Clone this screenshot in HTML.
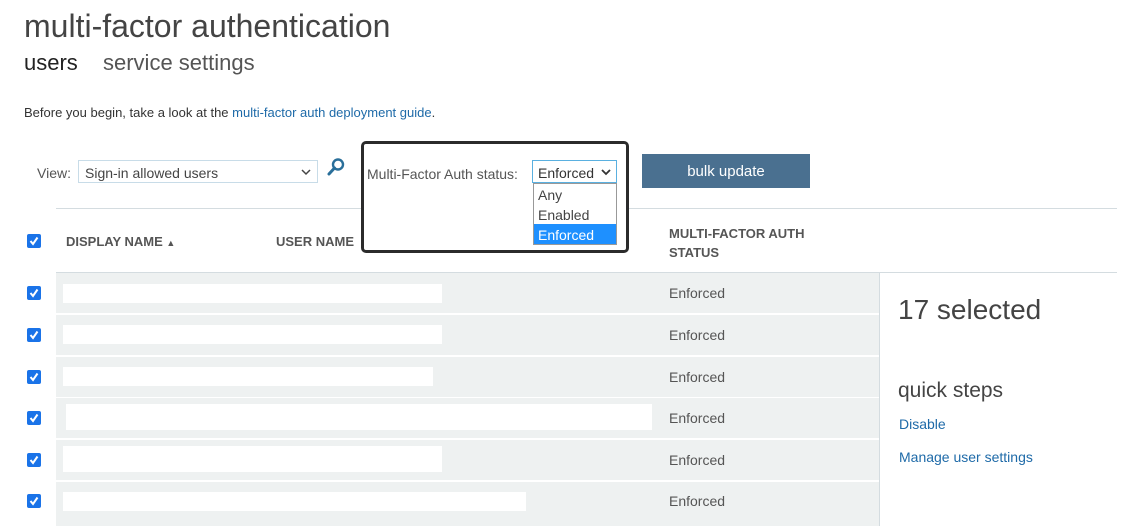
<!DOCTYPE html>
<html><head><meta charset="utf-8"><style>
body{margin:0;width:1140px;height:526px;background:#fff;font-family:"Liberation Sans",sans-serif;color:#333;position:relative;overflow:hidden}
.a{position:absolute;white-space:nowrap}
.cb{position:absolute;left:27px;width:14px;height:14px;background:#1a73e8;border-radius:2px}
.cb svg{position:absolute;left:2px;top:2px}
.row{position:absolute;left:56px;width:823px;height:40px;background:#eef1f1}
.bar{position:absolute;height:19px;background:#fff}
.enf{position:absolute;left:669px;font-size:14px;color:#555}
</style></head><body>
<div class="a" style="left:24px;top:8px;font-size:32px;color:#444;font-weight:300">multi-factor authentication</div>
<div class="a" style="left:24px;top:50px;font-size:22px;color:#222">users</div>
<div class="a" style="left:103px;top:50px;font-size:22px;color:#555">service settings</div>
<div class="a" style="left:24px;top:105px;font-size:13px;color:#333">Before you begin, take a look at the <span style="color:#1e6aa8">multi-factor auth deployment guide</span>.</div>
<div class="a" style="left:56px;top:208px;width:1061px;height:1px;background:#d4dce0"></div>
<div class="a" style="left:56px;top:272px;width:1061px;height:1px;background:#d4dce0"></div>
<div class="a" style="left:37px;top:165px;font-size:14px;color:#555">View:</div>
<div class="a" style="left:78px;top:160px;width:240px;height:23px;border:1px solid #c8dce8;box-sizing:border-box;font-size:14px;color:#444;padding:4px 0 0 6px">Sign-in allowed users<svg style="position:absolute;right:6px;top:8px" width="10" height="7"><path d="M1 1 L5 5 L9 1" fill="none" stroke="#444" stroke-width="1.5"/></svg></div>
<svg class="a" style="left:326px;top:157px" width="20" height="20" viewBox="0 0 20 20"><circle cx="12" cy="7.5" r="5" fill="none" stroke="#2a6f9a" stroke-width="2.4"/><path d="M8.5 11 L3 17" stroke="#2a6f9a" stroke-width="3" stroke-linecap="round"/></svg>
<div class="a" style="left:361px;top:141px;width:268px;height:112px;border:3px solid #2b2b2b;border-radius:5px;box-sizing:border-box;background:#fff"></div>
<div class="a" style="left:367px;top:166px;font-size:14px;color:#555">Multi-Factor Auth status:</div>
<div class="a" style="left:532px;top:160px;width:85px;height:23px;border:1px solid #5ab0e0;box-sizing:border-box;font-size:14px;color:#333;padding:4px 0 0 5px">Enforced<svg style="position:absolute;right:5px;top:8px" width="10" height="7"><path d="M1 1 L5 5 L9 1" fill="none" stroke="#333" stroke-width="1.8"/></svg></div>
<div class="a" style="left:533px;top:183px;width:84px;height:62px;border:1px solid #999;box-sizing:border-box;background:#fff;font-size:14px;color:#444">
<div style="height:20px;padding:3px 0 0 4px;box-sizing:border-box">Any</div>
<div style="height:20px;padding:3px 0 0 4px;box-sizing:border-box">Enabled</div>
<div style="height:20px;padding:3px 0 0 4px;box-sizing:border-box;background:#1e90ff;color:#fff">Enforced</div></div>
<div class="a" style="left:642px;top:154px;width:168px;height:34px;background:#4a7090;color:#fff;font-size:15px;text-align:center;line-height:36px">bulk update</div>
<div class="cb" style="top:234px"><svg width="10" height="10"><path d="M1.5 5 L4 8 L8.5 1.5" fill="none" stroke="#fff" stroke-width="2"/></svg></div>
<div class="a" style="left:66px;top:234px;font-size:13px;font-weight:bold;color:#555">DISPLAY NAME <span style="font-size:9px">&#9650;</span></div>
<div class="a" style="left:276px;top:234px;font-size:13px;font-weight:bold;color:#555">USER NAME</div>
<div class="a" style="left:669px;top:224px;font-size:13px;font-weight:bold;color:#555;line-height:19px">MULTI-FACTOR AUTH<br>STATUS</div>
<div class="a" style="left:879px;top:273px;width:1px;height:253px;background:#d4dce0"></div>

<div class="row" style="top:273px"></div><div class="bar" style="left:63px;top:284px;width:379px"></div>
<div class="row" style="top:315px"></div><div class="bar" style="left:63px;top:325px;width:379px"></div>
<div class="row" style="top:357px"></div><div class="bar" style="left:63px;top:367px;width:370px"></div>
<div class="row" style="top:398px"></div><div class="bar" style="left:66px;top:404px;width:586px;height:26px"></div>
<div class="row" style="top:440px"></div><div class="bar" style="left:63px;top:446px;width:379px;height:26px"></div>
<div class="row" style="top:482px;height:44px"></div><div class="bar" style="left:63px;top:492px;width:463px"></div>

<div class="cb" style="top:286px"><svg width="10" height="10"><path d="M1.5 5 L4 8 L8.5 1.5" fill="none" stroke="#fff" stroke-width="2"/></svg></div>
<div class="cb" style="top:328px"><svg width="10" height="10"><path d="M1.5 5 L4 8 L8.5 1.5" fill="none" stroke="#fff" stroke-width="2"/></svg></div>
<div class="cb" style="top:370px"><svg width="10" height="10"><path d="M1.5 5 L4 8 L8.5 1.5" fill="none" stroke="#fff" stroke-width="2"/></svg></div>
<div class="cb" style="top:411px"><svg width="10" height="10"><path d="M1.5 5 L4 8 L8.5 1.5" fill="none" stroke="#fff" stroke-width="2"/></svg></div>
<div class="cb" style="top:453px"><svg width="10" height="10"><path d="M1.5 5 L4 8 L8.5 1.5" fill="none" stroke="#fff" stroke-width="2"/></svg></div>
<div class="cb" style="top:494px"><svg width="10" height="10"><path d="M1.5 5 L4 8 L8.5 1.5" fill="none" stroke="#fff" stroke-width="2"/></svg></div>
<div class="enf" style="top:285px">Enforced</div>
<div class="enf" style="top:327px">Enforced</div>
<div class="enf" style="top:369px">Enforced</div>
<div class="enf" style="top:410px">Enforced</div>
<div class="enf" style="top:452px">Enforced</div>
<div class="enf" style="top:493px">Enforced</div>

<div class="a" style="left:898px;top:294px;font-size:28px;color:#444">17 selected</div>
<div class="a" style="left:898px;top:379px;font-size:21px;color:#444">quick steps</div>
<div class="a" style="left:899px;top:416px;font-size:14px;color:#1e6aa8">Disable</div>
<div class="a" style="left:899px;top:449px;font-size:14px;color:#1e6aa8">Manage user settings</div>
</body></html>
